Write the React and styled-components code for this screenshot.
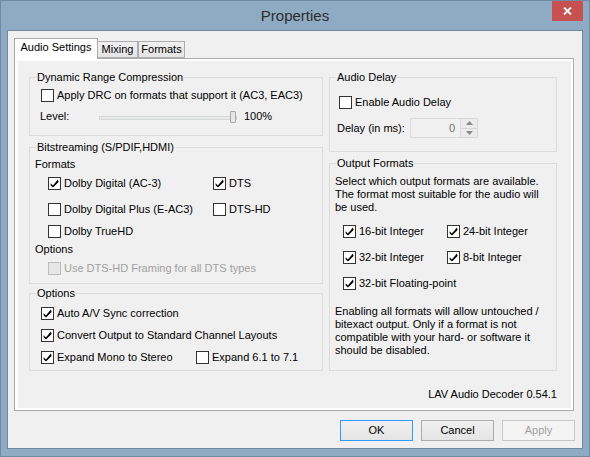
import React from "react";
import styled, { createGlobalStyle } from "styled-components";

const GlobalStyle = createGlobalStyle`
  html, body { margin: 0; padding: 0; background: #ffffff; }
  body {
    font-family: "Liberation Sans", Arial, sans-serif;
    font-size: 11px;
    line-height: 13px;
    color: #000;
  }
  * { box-sizing: border-box; }
`;

/* ---------- window chrome ---------- */

const Window = styled.div`
  width: 590px;
  height: 457px;
  border: 1px solid #6f8aa1;
  background: #8fabc4;
  padding: 0 6px 7px;
  display: flex;
  flex-direction: column;
`;

const TitleBar = styled.div`
  height: 29px;
  display: grid;
  grid-template-columns: 1fr auto 1fr;
  align-items: start;
`;

const Title = styled.div`
  grid-column: 2;
  font-size: 15px;
  line-height: 29px;
  color: #2b2b2b;
`;

const CloseButton = styled.div`
  grid-column: 3;
  justify-self: end;
  width: 31px;
  height: 20px;
  background: #c75050;
  display: flex;
  align-items: center;
  justify-content: center;
`;

const Client = styled.div`
  flex: 1;
  border: 1px solid #6f8aa1;
  background: #f0f0f0;
  padding: 7px 8px 7px 6px;
  display: flex;
  flex-direction: column;
`;

/* ---------- tabs ---------- */

const TabStrip = styled.div`
  height: 20px;
  display: flex;
  align-items: flex-end;
`;

const Tab = styled.div`
  width: ${(p) => p.$w}px;
  height: ${(p) => (p.$active ? 21 : 17)}px;
  margin-left: ${(p) => (p.$overlap ? -1 : 0)}px;
  margin-bottom: ${(p) => (p.$active ? -1 : 0)}px;
  border: 1px solid #adadad;
  border-bottom: ${(p) => (p.$active ? "none" : "1px solid #adadad")};
  background: ${(p) => (p.$active ? "#ffffff" : "linear-gradient(#f0f0f0, #e5e5e5)")};
  padding-top: ${(p) => (p.$active ? 2 : 1)}px;
  text-align: center;
  position: ${(p) => (p.$active ? "relative" : "static")};
  z-index: ${(p) => (p.$active ? 1 : "auto")};
`;

const TabPanel = styled.div`
  height: 353px;
  border: 1px solid #adadad;
  background: #ffffff;
  padding: 2px 2px 2px 3px;
  display: flex;
`;

const Page = styled.div`
  flex: 1;
  background: #f0f0f0;
  padding: 16px 14px 0 11px;
  display: flex;
  flex-direction: column;
`;

const Columns = styled.div`
  display: flex;
  gap: 6px;
  align-items: flex-start;
`;

const Column = styled.div`
  width: ${(p) => p.$w}px;
  display: flex;
  flex-direction: column;
`;

/* ---------- group boxes ---------- */

const Group = styled.div`
  position: relative;
  height: ${(p) => p.$h}px;
  margin-top: ${(p) => p.$mt || 0}px;
  border: 1px solid #dcdcdc;
  padding: ${(p) => p.$pad};
`;

const GroupTitle = styled.div`
  position: absolute;
  top: -7px;
  left: 6px;
  padding: 0 1px;
  background: #f0f0f0;
  white-space: nowrap;
`;

const SubLabel = styled.div`
  margin-top: ${(p) => p.$mt || 0}px;
`;

const Text = styled.div`
  margin-top: ${(p) => p.$mt || 0}px;
  white-space: nowrap;
`;

/* ---------- checkboxes ---------- */

const CheckRow = styled.label`
  display: flex;
  align-items: center;
  gap: 3px;
  height: 13px;
  margin-top: ${(p) => p.$mt || 0}px;
  margin-left: ${(p) => p.$ml || 0}px;
  color: ${(p) => (p.$disabled ? "#a0a0a0" : "#000")};
  white-space: nowrap;
`;

const Box = styled.span`
  width: 13px;
  height: 13px;
  flex: none;
  border: 1px solid ${(p) => (p.$disabled ? "#bcbcbc" : "#333333")};
  background: ${(p) => (p.$disabled ? "#e6e6e6" : "#ffffff")};
  display: flex;
`;

const PairRow = styled.div`
  display: grid;
  grid-template-columns: ${(p) => p.$first}px auto;
  margin-top: ${(p) => p.$mt || 0}px;
  margin-left: ${(p) => p.$ml || 0}px;
`;

const CheckMark = () => (
  <svg width="11" height="11" viewBox="0 0 11 11">
    <polygon points="1.6,5.2 3.9,7.4 8.9,1.6 9.6,3.9 4,9.6 1.6,7.3" fill="#000" />
  </svg>
);

const Check = ({ label, checked, disabled, mt, ml }) => (
  <CheckRow $mt={mt} $ml={ml} $disabled={disabled}>
    <Box $disabled={disabled}>{checked && <CheckMark />}</Box>
    <span>{label}</span>
  </CheckRow>
);

/* ---------- slider ---------- */

const LevelRow = styled.div`
  display: flex;
  align-items: flex-start;
  height: 13px;
  margin-top: ${(p) => p.$mt}px;
  margin-left: -1px;
`;

const LevelLabel = styled.div`
  width: 59px;
`;

const Slider = styled.div`
  position: relative;
  width: 138px;
  height: 13px;
`;

const Track = styled.div`
  margin-top: 6px;
  height: 4px;
  border: 1px solid #d6d6d6;
  background: #e7eaea;
`;

const Thumb = styled.div`
  position: absolute;
  top: 1px;
  width: 6px;
  height: 12px;
  border: 1px solid #a8a8a8;
  border-radius: 1px;
  background: #e7e7e7;
`;

const Percent = styled.div`
  margin-left: 7px;
`;

/* ---------- spin edit ---------- */

const DelayRow = styled.div`
  display: flex;
  align-items: center;
  height: 20px;
  margin-top: 9px;
  margin-left: -2px;
`;

const DelayLabel = styled.div`
  width: 73px;
`;

const Spin = styled.div`
  display: flex;
  width: 68px;
  height: 20px;
`;

const SpinEdit = styled.div`
  flex: 1;
  border: 1px solid #d9d9d9;
  background: #f0f0f0;
  color: #6d6d6d;
  text-align: right;
  padding-right: 5px;
  line-height: 18px;
`;

const SpinButtons = styled.div`
  width: 17px;
  display: flex;
  flex-direction: column;
`;

const SpinButton = styled.div`
  flex: 1;
  border: 1px solid #d9d9d9;
  border-left: none;
  border-top: ${(p) => (p.$lower ? "none" : "1px solid #d9d9d9")};
  background: #ececec;
  display: flex;
  align-items: center;
  justify-content: center;
`;

const Arrow = ({ down }) => (
  <svg width="7" height="4" viewBox="0 0 7 4">
    <polygon points={down ? "0,0 7,0 3.5,4" : "0,4 7,4 3.5,0"} fill="#8a8a8a" />
  </svg>
);

/* ---------- footer ---------- */

const Version = styled.div`
  margin-top: 17px;
  text-align: right;
`;

const ButtonRow = styled.div`
  display: flex;
  justify-content: flex-end;
  gap: 8px;
  margin-top: 9px;
  margin-right: -1px;
`;

const Button = styled.div`
  width: 73px;
  height: 21px;
  border: 1px solid ${(p) => (p.$default ? "#3399ff" : p.$disabled ? "#c8c8c8" : "#adadad")};
  background: ${(p) => (p.$disabled ? "#f4f4f4" : "linear-gradient(#f0f0f0, #e5e5e5)")};
  color: ${(p) => (p.$disabled ? "#a0a0a0" : "#000")};
  display: flex;
  align-items: center;
  justify-content: center;
`;

export default function App() {
  const level = 100;
  return (
    <>
      <GlobalStyle />
      <Window>
        <TitleBar>
          <Title>Properties</Title>
          <CloseButton>
            <svg width="9" height="8" viewBox="0 0 9 8">
              <path d="M1 0.5 L8 7.5 M8 0.5 L1 7.5" stroke="#fff" strokeWidth="1.8" />
            </svg>
          </CloseButton>
        </TitleBar>
        <Client>
          <TabStrip>
            <Tab $active $w={84}>Audio Settings</Tab>
            <Tab $w={41} $overlap>Mixing</Tab>
            <Tab $w={47}>Formats</Tab>
          </TabStrip>
          <TabPanel>
            <Page>
              <Columns>
                <Column $w={294}>
                  <Group $h={59} $pad="11px 0 0 11px">
                    <GroupTitle>Dynamic Range Compression</GroupTitle>
                    <Check label="Apply DRC on formats that support it (AC3, EAC3)" />
                    <LevelRow $mt={8}>
                      <LevelLabel>Level:</LevelLabel>
                      <Slider>
                        <Track />
                        <Thumb style={{ left: `${(131 * level) / 100}px` }} />
                      </Slider>
                      <Percent>{level}%</Percent>
                    </LevelRow>
                  </Group>

                  <Group $h={137} $mt={11} $pad="10px 0 0 5px">
                    <GroupTitle>Bitstreaming (S/PDIF,HDMI)</GroupTitle>
                    <SubLabel>Formats</SubLabel>
                    <PairRow $first={165} $mt={6} $ml={13}>
                      <Check label="Dolby Digital (AC-3)" checked />
                      <Check label="DTS" checked />
                    </PairRow>
                    <PairRow $first={165} $mt={13} $ml={13}>
                      <Check label="Dolby Digital Plus (E-AC3)" />
                      <Check label="DTS-HD" />
                    </PairRow>
                    <Check label="Dolby TrueHD" mt={9} ml={13} />
                    <SubLabel $mt={5}>Options</SubLabel>
                    <Check label="Use DTS-HD Framing for all DTS types" disabled mt={6} ml={13} />
                  </Group>

                  <Group $h={78} $mt={9} $pad="13px 0 0 11px">
                    <GroupTitle>Options</GroupTitle>
                    <Check label="Auto A/V Sync correction" checked />
                    <Check label="Convert Output to Standard Channel Layouts" checked mt={9} />
                    <PairRow $first={155} $mt={9}>
                      <Check label="Expand Mono to Stereo" checked />
                      <Check label="Expand 6.1 to 7.1" />
                    </PairRow>
                  </Group>
                </Column>

                <Column $w={228}>
                  <Group $h={75} $pad="18px 0 0 9px">
                    <GroupTitle>Audio Delay</GroupTitle>
                    <Check label="Enable Audio Delay" />
                    <DelayRow>
                      <DelayLabel>Delay (in ms):</DelayLabel>
                      <Spin>
                        <SpinEdit>0</SpinEdit>
                        <SpinButtons>
                          <SpinButton><Arrow /></SpinButton>
                          <SpinButton $lower><Arrow down /></SpinButton>
                        </SpinButtons>
                      </Spin>
                    </DelayRow>
                  </Group>

                  <Group $h={208} $mt={11} $pad="11px 0 0 5px">
                    <GroupTitle>Output Formats</GroupTitle>
                    <Text>Select which output formats are available.</Text>
                    <Text>The format most suitable for the audio will</Text>
                    <Text>be used.</Text>
                    <PairRow $first={104} $mt={11} $ml={8}>
                      <Check label="16-bit Integer" checked />
                      <Check label="24-bit Integer" checked />
                    </PairRow>
                    <PairRow $first={104} $mt={13} $ml={8}>
                      <Check label="32-bit Integer" checked />
                      <Check label="8-bit Integer" checked />
                    </PairRow>
                    <Check label="32-bit Floating-point" checked mt={13} ml={8} />
                    <Text $mt={15}>Enabling all formats will allow untouched /</Text>
                    <Text>bitexact output. Only if a format is not</Text>
                    <Text>compatible with your hard- or software it</Text>
                    <Text>should be disabled.</Text>
                  </Group>
                </Column>
              </Columns>
              <Version>LAV Audio Decoder 0.54.1</Version>
            </Page>
          </TabPanel>
          <ButtonRow>
            <Button $default>OK</Button>
            <Button>Cancel</Button>
            <Button $disabled>Apply</Button>
          </ButtonRow>
        </Client>
      </Window>
    </>
  );
}
